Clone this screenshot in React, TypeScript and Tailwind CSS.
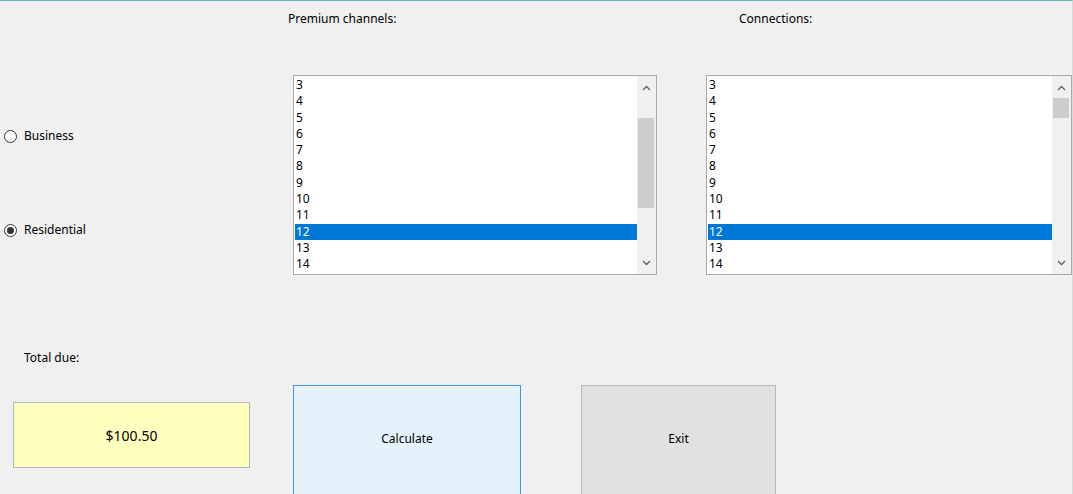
import React from "react";

const items = ["3", "4", "5", "6", "7", "8", "9", "10", "11", "12", "13", "14"];

function Chevron({ up }: { up?: boolean }) {
  return (
    <svg width="9" height="6" viewBox="0 0 9 6" className="block">
      <polyline
        points={up ? "1,5 4.5,1.5 8,5" : "1,1 4.5,4.5 8,1"}
        fill="none"
        stroke="#606060"
        strokeWidth="1.3"
      />
    </svg>
  );
}

function ListBox({ thumbTop, thumbHeight }: { thumbTop: number; thumbHeight: number }) {
  return (
    <div className="flex h-[200px] border border-[#a9a9a9] bg-white">
      <div className="flex-1 pt-[1px] pl-[1px]">
        {items.map((it) => (
          <div
            key={it}
            className={
              "h-[16.3px] pl-[1px] leading-[16.3px] " +
              (it === "12" ? "bg-[#0078d7] text-white" : "text-black")
            }
          >
            {it}
          </div>
        ))}
      </div>
      <div className="flex w-[19px] flex-col bg-[#f0f0f0]">
        <div className="flex h-[19px] items-center justify-center pt-[4px]">
          <Chevron up />
        </div>
        <div className="relative flex-1">
          <div
            className="absolute left-[1px] right-[2px] bg-[#cdcdcd]"
            style={{ top: thumbTop, height: thumbHeight }}
          />
        </div>
        <div className="flex h-[19px] items-center justify-center pb-[4px]">
          <Chevron />
        </div>
      </div>
    </div>
  );
}

function Radio({ label, checked }: { label: string; checked?: boolean }) {
  return (
    <div className="flex items-center gap-[7px]">
      <div className="flex h-[13px] w-[13px] items-center justify-center rounded-full border border-[#333333] bg-white">
        {checked && <div className="h-[7px] w-[7px] rounded-full bg-[#333333]" />}
      </div>
      <span>{label}</span>
    </div>
  );
}

export default function App() {
  return (
    <div
      className="h-[494px] w-[1073px] overflow-hidden border-t border-r border-t-[#64b8b8] border-r-[#d9d9d9] bg-[#f0f0f0] text-[12px] text-black"
      style={{ fontFamily: '"Noto Sans", "Liberation Sans", sans-serif' }}
    >
      <div className="flex h-[384px]">
        <div className="flex w-[288px] flex-col pl-[4px]">
          <div className="mt-[126px]">
            <Radio label="Business" />
          </div>
          <div className="mt-[76px]">
            <Radio label="Residential" checked />
          </div>
          <div className="mt-[110px] pl-[20px]">Total due:</div>
        </div>
        <div className="flex w-[369px] flex-col">
          <div className="mt-[9px] h-[17px]">Premium channels:</div>
          <div className="ml-[5px] mt-[48px]">
            <ListBox thumbTop={23} thumbHeight={90} />
          </div>
        </div>
        <div className="ml-[49px] flex w-[366px] flex-col">
          <div className="mt-[9px] h-[17px] pl-[33px]">Connections:</div>
          <div className="mt-[48px]">
            <ListBox thumbTop={3} thumbHeight={20} />
          </div>
        </div>
      </div>
      <div className="flex h-[110px]">
        <div className="w-[293px] pl-[13px] pt-[17px]">
          <div className="flex h-[66px] w-[237px] items-center justify-center border border-[#b4b4b4] bg-[#ffffc0] text-[14px]">
            $100.50
          </div>
        </div>
        <button className="flex h-[112px] w-[228px] items-center justify-center border border-[#3c98e0] bg-[#e5f1fb] pb-[4px]">
          Calculate
        </button>
        <button className="ml-[60px] flex h-[112px] w-[195px] items-center justify-center border border-[#b9b9b9] bg-[#e1e1e1] pb-[4px]">
          Exit
        </button>
      </div>
    </div>
  );
}
